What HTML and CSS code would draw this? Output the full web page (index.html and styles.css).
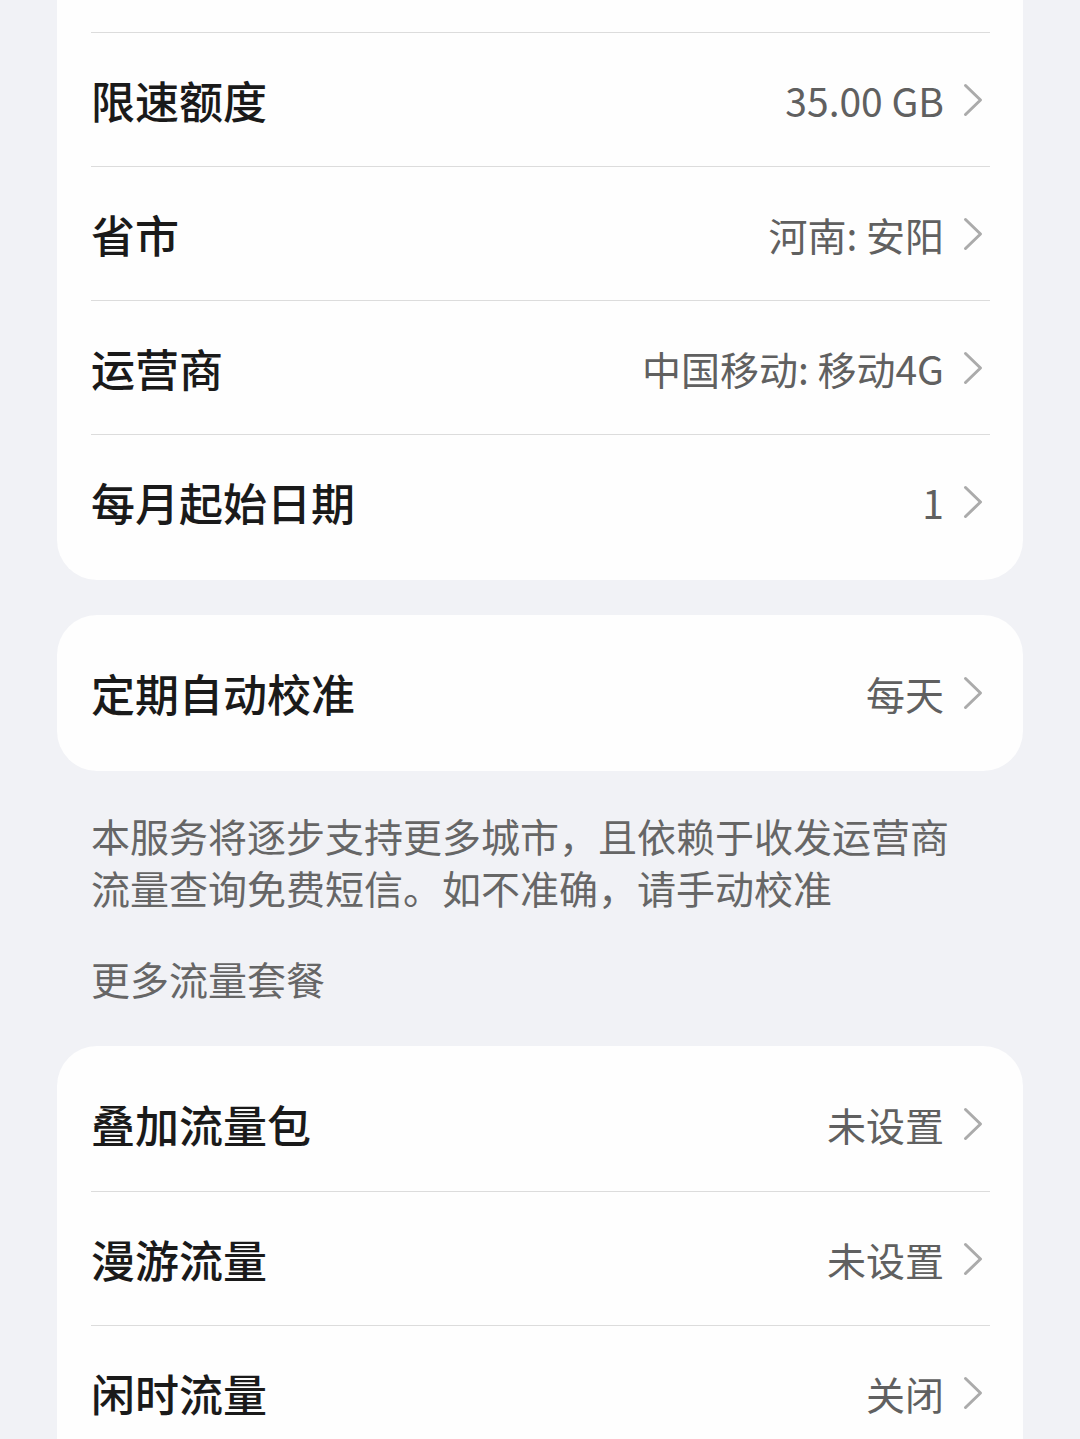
FILE: index.html
```html
<!DOCTYPE html>
<html lang="zh-CN">
<head>
<meta charset="utf-8">
<link rel="stylesheet" href="styles.css">
</head>
<body>
<div class="page">
  <div class="card card-cut">
    <div class="row"><span class="title">限速额度</span><span class="value">35.00 GB</span><svg class="chev" viewBox="0 0 20 34"><path d="M2.5 2.5 L17.5 17 L2.5 31.5"/></svg></div>
    <div class="row"><span class="title">省市</span><span class="value">河南: 安阳</span><svg class="chev" viewBox="0 0 20 34"><path d="M2.5 2.5 L17.5 17 L2.5 31.5"/></svg></div>
    <div class="row"><span class="title">运营商</span><span class="value">中国移动: 移动4G</span><svg class="chev" viewBox="0 0 20 34"><path d="M2.5 2.5 L17.5 17 L2.5 31.5"/></svg></div>
    <div class="row"><span class="title">每月起始日期</span><span class="value">1</span><svg class="chev" viewBox="0 0 20 34"><path d="M2.5 2.5 L17.5 17 L2.5 31.5"/></svg></div>
  </div>

  <div class="card card-gap">
    <div class="row"><span class="title">定期自动校准</span><span class="value">每天</span><svg class="chev" viewBox="0 0 20 34"><path d="M2.5 2.5 L17.5 17 L2.5 31.5"/></svg></div>
  </div>

  <p class="note">本服务将逐步支持更多城市，且依赖于收发运营商流量查询免费短信。如不准确，请手动校准</p>
  <div class="section-label">更多流量套餐</div>

  <div class="card card-last">
    <div class="row"><span class="title">叠加流量包</span><span class="value">未设置</span><svg class="chev" viewBox="0 0 20 34"><path d="M2.5 2.5 L17.5 17 L2.5 31.5"/></svg></div>
    <div class="row"><span class="title">漫游流量</span><span class="value">未设置</span><svg class="chev" viewBox="0 0 20 34"><path d="M2.5 2.5 L17.5 17 L2.5 31.5"/></svg></div>
    <div class="row"><span class="title">闲时流量</span><span class="value">关闭</span><svg class="chev" viewBox="0 0 20 34"><path d="M2.5 2.5 L17.5 17 L2.5 31.5"/></svg></div>
  </div>
</div>
</body>
</html>
```

FILE: styles.css
```css
* { box-sizing: border-box; }

html, body {
  margin: 0;
  padding: 0;
  background: #f1f2f6;
}

body {
  font-family: "Noto Sans CJK SC", "Noto Sans", sans-serif;
  overflow: hidden;
  height: 1439px;
}

.page {
  padding: 0 57px;
}

.card {
  background: #fefefe;
  border-radius: 40px;
  padding: 11px 33px 11px 34px;
}

.card-cut {
  border-top-left-radius: 0;
  border-top-right-radius: 0;
  padding-top: 32px;
  padding-bottom: 12px;
}

.card-gap {
  margin-top: 35px;
}

.card-last {
  margin-top: 42px;
  padding-bottom: 40px;
}

.row {
  display: flex;
  align-items: center;
  height: 134px;
}

.row + .row,
.card-cut .row:first-child {
  border-top: 1px solid #dcdcdc;
}

.title {
  flex: 1;
  font-size: 44px;
  font-weight: 500;
  color: #1a1a1a;
  line-height: 52px;
}

.value {
  font-size: 39px;
  color: #606060;
  line-height: 52px;
}

.chev {
  width: 20px;
  height: 34px;
  margin-left: 19px;
  margin-right: 7px;
  flex: none;
}

.chev path {
  fill: none;
  stroke: #ababab;
  stroke-width: 3;
  stroke-linecap: round;
  stroke-linejoin: round;
}

.note {
  margin: 38px 60px 0 34px;
  font-size: 39px;
  line-height: 52px;
  color: #666666;
}

.section-label {
  margin: 39px 0 0 34px;
  font-size: 39px;
  line-height: 52px;
  color: #666666;
}
```
